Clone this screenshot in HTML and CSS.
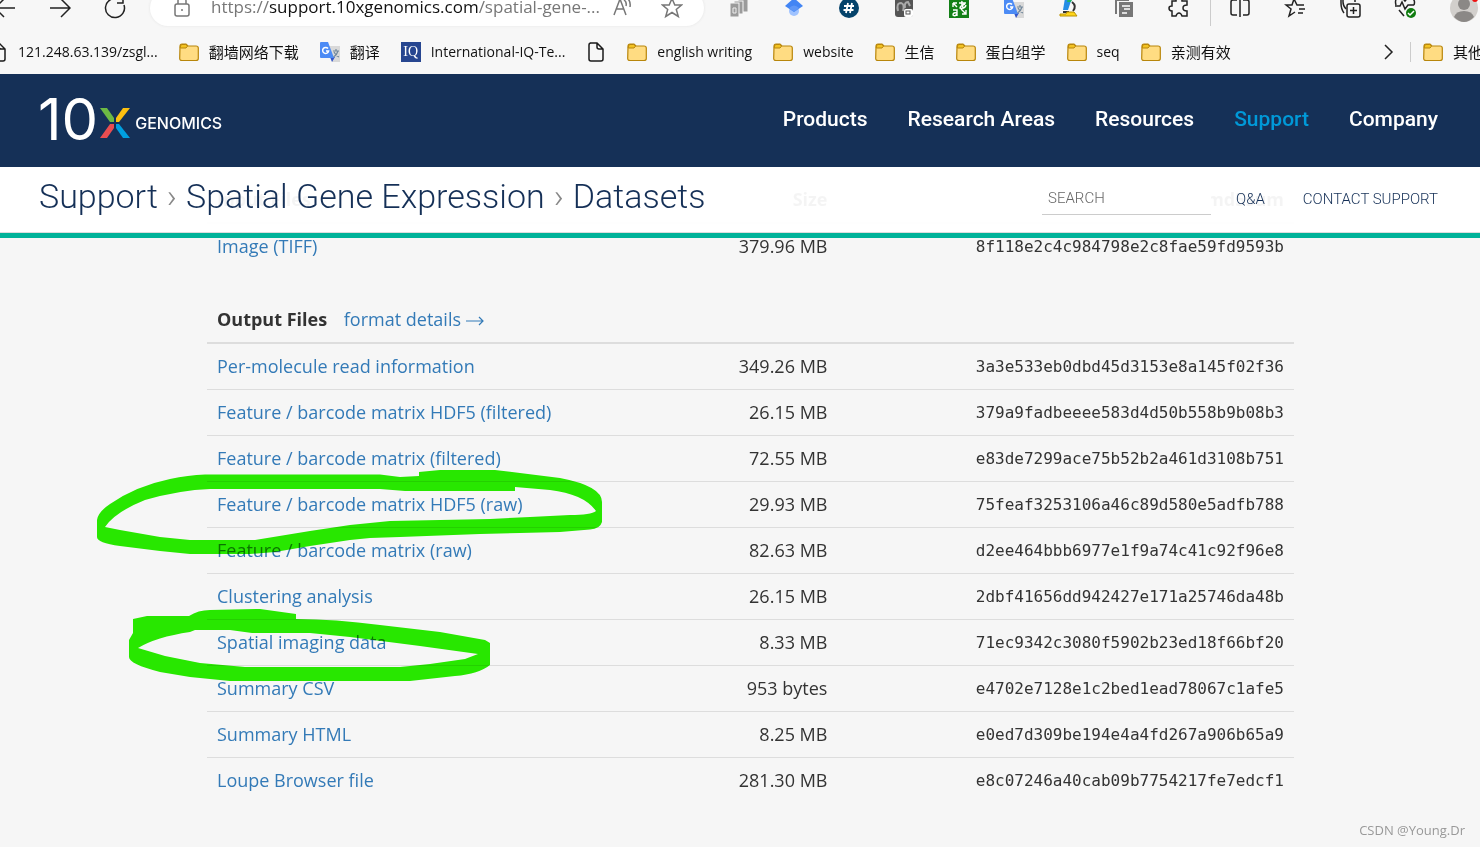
FILE: index.html
```
<!DOCTYPE html>
<html lang="en">
<head>
    <meta charset="UTF-8">
    <meta name="viewport" content="width=device-width, initial-scale=1.0">
    <title>Datasets - Spatial Gene Expression</title>
    <link rel="stylesheet" href="styles.css">
</head>
<body>

    <!-- shared icons -->
    <svg class="defs" width="0" height="0">
        <symbol id="folder" viewBox="0 0 20 20">
            <path d="M1 4.500Q1 2 3 2H7L9 4H17Q19.300 4 19.300 6V16.500Q19.300 18.500 17 18.500H3Q.7 18.500.7 16.500Z" fill="#ffdc82" stroke="#b8860b" stroke-width="1.200"/>
            <path d="M1.300 5Q1.300 2.500 3 2.500H6.800L8.500 4.200 7 6H1.300Z" fill="#f3c322" stroke="#b8860b" stroke-width="1"/>
        </symbol>
        <symbol id="page" viewBox="0 0 20 20">
            <path d="M4 1H11L17 7V17Q17 19 15 19H5Q3 19 3 17V3Q3 1 5 1M11 1V5Q11 7 13 7H17" fill="none" stroke="#1b1b1b" stroke-width="1.500"/>
        </symbol>
        <symbol id="gtrans" viewBox="0 0 20 20">
            <path d="M8 4H20V20H12Z" fill="#d9d9d9" stroke="none"/>
            <path d="M12 20L10 15H15Z" fill="#3557c9" stroke="none"/>
            <path d="M1 0H8L14 16H1Q0 16 0 15V1Q0 0 1 0Z" fill="#4c8bf5" stroke="none"/>
            <path d="M8 6.500A3 3 0 1 0 8.600 9H6" fill="none" stroke="#fff" stroke-width="1.500"/>
            <path d="M13 9H19M16 7V9M18 9Q17 13 13.500 15M14 10Q16 14 19 15" fill="none" stroke="#72889c" stroke-width="1.200"/>
        </symbol>
    </svg>

    <div class="browser">
        <div class="toolbar">
            <button class="tool" aria-label="Back"><svg width="22" height="22" viewBox="0 0 22 22"><path d="M21 11H2M10 2L1 11L10 20"/></svg></button>
            <button class="tool" aria-label="Forward"><svg width="22" height="22" viewBox="0 0 22 22"><path d="M1 11H20M12 2L21 11L12 20"/></svg></button>
            <button class="tool" aria-label="Reload"><svg width="22" height="22" viewBox="0 0 22 22"><path d="M14 2A9.500 9.500 0 1 0 20 8M13 6H19V0"/></svg></button>
            <div class="address">
                <svg class="gray" width="18" height="22" viewBox="0 0 18 22"><rect x="2" y="7" width="14" height="12" rx="2"/><path d="M5 7V4A4 4 0 0 1 13 4V7"/><circle cx="9" cy="13" r="1" fill="#777" stroke="none"/></svg>
                <span class="url">https://<b>support.10xgenomics.com</b>/spatial-gene-...</span>
                <button class="inner" aria-label="Read aloud"><svg class="gray" width="22" height="22" viewBox="0 0 22 22"><path d="M2 18L8 2L14 18M4 12H12M12 3Q15 5 14 9M15 1Q19 4 18 10"/></svg></button>
                <button class="inner star" aria-label="Favorite"><svg class="gray" width="22" height="22" viewBox="0 0 22 22"><path d="M11 1.500L13.800 8H20.500L15.300 12.500L17.300 19.500L11 15.500L4.700 19.500L6.700 12.500L1.500 8H8.200Z"/></svg></button>
            </div>
            <button class="tool first" aria-label="Copy pages"><svg width="20" height="20" viewBox="0 0 20 20"><g stroke="#f7f7f7" stroke-width="1" fill="#9b9b9b"><rect x="9" y="1" width="10" height="13"/><rect x="5" y="3" width="9" height="13"/><rect x="1" y="5" width="9" height="14"/></g><path d="M4 10H7V15H4Z" stroke="#eee" stroke-width="1"/></svg></button>
            <button class="tool" aria-label="Scholar"><svg width="20" height="20" viewBox="0 0 20 20"><g stroke="none"><circle cx="10" cy="13" r="5" fill="#a0c3ff"/><path d="M10 0L19 8L10 14L1 8Z" fill="#4285f4"/><path d="M5 10Q10 5 15 10L10 14Z" fill="#5e97f6"/></g></svg></button>
            <button class="tool" aria-label="Hashtag"><svg width="20" height="20" viewBox="0 0 20 20"><circle cx="10" cy="10" r="10" fill="#05436b" stroke="none"/><path d="M9 5L7 15M13 5L11 15M5 8H15M4.500 12H14.500" stroke="#fff" stroke-width="1.800"/></svg></button>
            <button class="tool" aria-label="Reader"><svg width="20" height="20" viewBox="0 0 20 20"><rect x="1" y="0" width="18" height="19" rx="3" fill="#555" stroke="none"/><path d="M4 13Q2 5 7 5Q11 6 9 13M11 10Q10 4 14 4L16 8" stroke="#aaa" stroke-width="2"/><rect x="10" y="11" width="9" height="8" rx="2" fill="#fff" stroke="none"/><rect x="12" y="13" width="4" height="3" stroke="#555" stroke-width="1"/></svg></button>
            <button class="tool" aria-label="Translate page"><svg width="20" height="20" viewBox="0 0 20 20"><rect width="20" height="20" fill="#138017" stroke="none"/><g stroke="#fff" stroke-width="1.400"><path d="M4 5H8M4 5V9M4 5L8 9M12 11L17 16M17 12V16H13M10 5H17M13 3Q12 8 15 10M16 6Q11 8 11 10Q16 11 17 7M4 12H8V18M8 15Q4 14 4 17Q6 19 8 16"/></g></svg></button>
            <button class="tool" aria-label="Google Translate"><svg width="20" height="20"><use href="#gtrans"/></svg></button>
            <button class="tool" aria-label="Microscope"><svg width="20" height="20" viewBox="0 0 20 20"><g stroke="none"><path d="M6 0H13L9 12H4Z" fill="#248de5"/><path d="M9 0H14L12 4H8Z" fill="#20b36b"/></g><path d="M13 4Q18 8 14 13M4 14H10" stroke="#333" stroke-width="2"/><path d="M1 18H18L15 14H8L7 16H1Z" fill="#ffd51b" stroke="#ba9200" stroke-width="1"/></svg></button>
            <button class="tool" aria-label="Notes"><svg width="20" height="20" viewBox="0 0 20 20"><path d="M2 16V2H15" stroke="#777" stroke-width="2"/><rect x="5" y="4" width="14" height="15" fill="#777" stroke="none"/><path d="M8 8H16M10 11H16M8 15H13" stroke="#fff" stroke-width="1.500"/></svg></button>
            <button class="tool" aria-label="Extensions"><svg width="22" height="22" viewBox="0 0 22 22"><path d="M4 4H8Q8 0 11 0Q14 0 14 4H19V8Q15 8 15 11Q15 14 19 14V19H14Q13 16 11 16Q9 16 8 19H4V14Q1 14 1 11Q1 9 4 9Z"/></svg></button>
            <span class="line"></span>
            <button class="tool" aria-label="Split screen"><svg width="22" height="22" viewBox="0 0 22 22"><path d="M8 3H4Q2 3 2 5V16Q2 18 4 18H8M11 0V20M14 3H18Q20 3 20 5V16Q20 18 18 18H14"/></svg></button>
            <button class="tool" aria-label="Favorites"><svg width="22" height="22" viewBox="0 0 22 22"><path d="M20 8H13L10 2L8 8H2L7 12L5 19L11 15M15 12H21M14 16H19"/></svg></button>
            <button class="tool" aria-label="Collections"><svg width="22" height="22" viewBox="0 0 22 22"><path d="M5 16Q2 12 2 6V3M4 0V5Q4 9 7 12M16 5V3"/><rect x="8" y="7" width="13" height="13" rx="2"/><path d="M14.500 10V17M11 13.500H18"/></svg></button>
            <button class="tool" aria-label="Browser essentials"><svg width="22" height="22" viewBox="0 0 22 22"><path d="M2 8Q0 1 6 1Q9 1 11 4Q13 1 16 1Q22 2 20 8M1 9H6L8 5L11 12L14 8H20M5 13L10 19"/><circle cx="17" cy="16" r="5" fill="#107c10" stroke="none"/><path d="M14 16L16 18L20 14" stroke="#fff"/></svg></button>
            <button class="tool" aria-label="Profile"><svg width="28" height="28" viewBox="0 0 28 28"><circle cx="14" cy="14" r="14" fill="#d2cfcc" stroke="none"/><g fill="#8b8886" stroke="none"><circle cx="14" cy="10" r="6"/><path d="M4 23Q6 17 14 17Q22 17 24 23Q19 28 14 28Q9 28 4 23Z"/></g><circle cx="25" cy="5" r="3" fill="#e11" stroke="none"/></svg></button>
        </div>

        <div class="bookmarks">
            <a href="#"><svg><use href="#page"/></svg>121.248.63.139/zsgl...</a>
            <a href="#"><svg><use href="#folder"/></svg><span class="zh">翻墙网络下载</span></a>
            <a href="#"><svg><use href="#gtrans"/></svg><span class="zh">翻译</span></a>
            <a href="#"><span class="iq">IQ</span>International-IQ-Te...</a>
            <a href="#" aria-label="Page"><svg><use href="#page"/></svg></a>
            <a href="#"><svg><use href="#folder"/></svg>english writing</a>
            <a href="#"><svg><use href="#folder"/></svg>website</a>
            <a href="#"><svg><use href="#folder"/></svg><span class="zh">生信</span></a>
            <a href="#"><svg><use href="#folder"/></svg><span class="zh">蛋白组学</span></a>
            <a href="#"><svg><use href="#folder"/></svg>seq</a>
            <a href="#"><svg><use href="#folder"/></svg><span class="zh">亲测有效</span></a>
            <button class="more" aria-label="More bookmarks"><svg viewBox="0 0 20 20"><path d="M7 3L14 10L7 17" fill="none" stroke="#222" stroke-width="1.500"/></svg></button>
            <a class="other" href="#"><svg><use href="#folder"/></svg><span class="zh">其他</span></a>
        </div>
    </div>

    <header class="top">
        <a class="logo" href="#">
            <span class="ten">10</span>
            <svg width="32" height="32" viewBox="0 0 32 32">
                <path d="M1 1H8L15 11V15H11Z" fill="#6cb944"/>
                <path d="M31 1H24L17 11V15H20Z" fill="#fdc010"/>
                <path d="M1 31H8L15 21V17H11Z" fill="#ea4d50"/>
                <path d="M31 31H24L17 21V17H20Z" fill="#009fdf"/>
            </svg>
            <span class="genomics">GENOMICS</span>
        </a>
        <nav>
            <a href="#">Products</a>
            <a href="#">Research Areas</a>
            <a href="#">Resources</a>
            <a class="active" href="#">Support</a>
            <a href="#">Company</a>
        </nav>
    </header>

    <div class="sub">
        <div class="crumbs">
            <a href="#">Support</a><i>›</i><a href="#">Spatial Gene Expression</a><i>›</i><a href="#">Datasets</a>
        </div>
        <input type="text" placeholder="SEARCH" aria-label="Search">
        <a class="small" href="#">Q&amp;A</a>
        <a class="small" href="#">CONTACT SUPPORT</a>
    </div>

    <main>
        <table>
            <colgroup><col class="name"><col class="size"><col></colgroup>
            <tr><th>Input Files</th><th>Size</th><th>md5sum</th></tr>
            <tr><td><a href="#">Image (TIFF)</a></td><td>379.96 MB</td><td>8f118e2c4c984798e2c8fae59fd9593b</td></tr>
        </table>
        <table>
            <colgroup><col class="name"><col class="size"><col></colgroup>
            <tr><th colspan="3">Output Files <a href="#">format details <svg width="18" height="10" viewBox="0 0 18 10"><path d="M0 5H17M13 1L17 5L13 9" fill="none" stroke="#337ab7" stroke-width="1.200"/></svg></a></th></tr>
            <tr><td><a href="#">Per-molecule read information</a></td><td>349.26 MB</td><td>3a3e533eb0dbd45d3153e8a145f02f36</td></tr>
            <tr><td><a href="#">Feature / barcode matrix HDF5 (filtered)</a></td><td>26.15 MB</td><td>379a9fadbeeee583d4d50b558b9b08b3</td></tr>
            <tr><td><a href="#">Feature / barcode matrix (filtered)</a></td><td>72.55 MB</td><td>e83de7299ace75b52b2a461d3108b751</td></tr>
            <tr><td><a href="#">Feature / barcode matrix HDF5 (raw)</a></td><td>29.93 MB</td><td>75feaf3253106a46c89d580e5adfb788</td></tr>
            <tr><td><a href="#">Feature / barcode matrix (raw)</a></td><td>82.63 MB</td><td>d2ee464bbb6977e1f9a74c41c92f96e8</td></tr>
            <tr><td><a href="#">Clustering analysis</a></td><td>26.15 MB</td><td>2dbf41656dd942427e171a25746da48b</td></tr>
            <tr><td><a href="#">Spatial imaging data</a></td><td>8.33 MB</td><td>71ec9342c3080f5902b23ed18f66bf20</td></tr>
            <tr><td><a href="#">Summary CSV</a></td><td>953 bytes</td><td>e4702e7128e1c2bed1ead78067c1afe5</td></tr>
            <tr><td><a href="#">Summary HTML</a></td><td>8.25 MB</td><td>e0ed7d309be194e4a4fd267a906b65a9</td></tr>
            <tr><td><a href="#">Loupe Browser file</a></td><td>281.30 MB</td><td>e8c07246a40cab09b7754217fe7edcf1</td></tr>
        </table>
    </main>

    <!-- hand drawn marker rings -->
    <svg class="marker" width="640" height="700" viewBox="0 0 640 700">
        <path d="M97 520Q98 512 110 504Q136 486 170 479Q188 475 205 474.500H380L400 477L419 476V472L440 470H495L520 473L560 478Q602 486 602 502V522Q600 529 590 529.500L560 532L520 533L480 534L400 537L370 538L350 540L310 546L275 552L250 554H190L160 551L120 546Q97 543 97 537ZM105 527L120 530L160 537L190 540H255L310 531L350 525L390 521L490 519L530 517L570 515Q591 515 596 511Q584 494 550 490L515 487V491H405L380 489H210Q180 490 145 500Q115 512 105 527Z"/>
        <path d="M133 619L147 616H189Q198 610 210 610L260 609L296 614V619Q335 619 380 625L440 632L485 640L490 643V665Q479 674 455 676L410 681H230L190 677L160 672Q129 664 129 657V640L133 633ZM138 648L165 656L200 663L245 667H400L430 664L465 659L478 654L420 646L350 637L310 633H252L230 630H195L190 632Q156 637 138 648Z"/>
    </svg>

    <div class="watermark">CSDN @Young.Dr</div>
</body>
</html>
```
FILE: styles.css
```
* {
    box-sizing: border-box;
}
body {
    margin: 0;
    min-height: 100vh;
    position: relative;
    overflow-x: hidden;
    background: #f6f6f6;
    color: #333;
    font-family: "Open Sans", "Noto Sans CJK SC", sans-serif;
    font-size: 18px;
}
a {
    color: #337ab7;
    text-decoration: none;
}
button {
    border: 0;
    padding: 0;
    background: none;
}
.defs {
    position: absolute;
}

/* browser chrome */
.browser {
    overflow: hidden;
    background: #f7f7f7;
}
.toolbar {
    display: flex;
    align-items: center;
    height: 36px;
    margin: -10px -11px 0 -23px;
}
.toolbar svg {
    fill: none;
    stroke: #222;
    stroke-width: 1.5;
    display: block;
    margin: auto;
}
.toolbar svg.gray {
    stroke: #777;
    margin: 0;
    flex: none;
}
.tool {
    flex: none;
    width: 55px;
}
.tool:last-child {
    margin-left: 4px;
}
.tool.first {
    margin-left: 7px;
}
.line {
    width: 1px;
    height: 36px;
    margin: 0 1px 0 4px;
    background: #ccc;
}
.address {
    flex: 1;
    min-width: 0;
    display: flex;
    align-items: center;
    height: 36px;
    margin-left: 8px;
    padding: 0 21px 0 23px;
    border-radius: 18px;
    background: #fff;
    box-shadow: 0 0 3px #e4e4e4;
}
.url {
    flex: 1;
    margin-left: 20px;
    color: #777;
    font-size: 17px;
    line-height: 20px;
    padding-bottom: 2px;
    white-space: nowrap;
}
.url b {
    color: #111;
    font-weight: normal;
}
.inner {
    margin-left: 12px;
}
.star {
    margin-left: 27px;
}
.bookmarks {
    display: flex;
    align-items: center;
    gap: 21px;
    height: 44px;
    margin: 4px 0 0 -12px;
}
.bookmarks a {
    display: flex;
    align-items: center;
    gap: 10px;
    flex: none;
    color: #111;
    font-size: 14px;
    line-height: 20px;
}
.bookmarks svg {
    width: 20px;
    height: 20px;
    display: block;
}
.zh {
    font-family: "Noto Sans CJK SC", sans-serif;
    font-size: 15px;
}
.iq {
    width: 20px;
    background: #274690;
    color: #fff;
    font-family: "Liberation Serif", serif;
    text-align: center;
}
.more {
    margin-left: auto;
}
.bookmarks .other {
    margin-right: -3px;
    padding-left: 12px;
    border-left: 1px solid #ccc;
    margin-left: -9px;
}

/* site header */
.top {
    display: flex;
    align-items: center;
    justify-content: space-between;
    height: 93px;
    padding: 0 42px 4px 38px;
    background: #153057;
}
.logo {
    display: flex;
    align-items: center;
    color: #fff;
}
.ten {
    font: 58px/58px Inter, sans-serif;
}
.logo svg {
    margin: 9px 0 0 1px;
}
.genomics {
    margin: 8px 0 0 4px;
    font: 500 16px/20px Inter, sans-serif;
}
nav {
    display: flex;
    gap: 40px;
}
nav a {
    color: #fff;
    font: 500 21px/26px Roboto, sans-serif;
}
nav .active {
    color: #0099d8;
}

.sub {
    position: relative;
    z-index: 1;
    display: flex;
    align-items: center;
    height: 71px;
    padding: 0 42px 8px 39px;
    background: rgba(255, 255, 255, 0.95);
    border-bottom: 5px solid #00b299;
    font-family: Roboto, sans-serif;
    box-shadow: inset 0 -1px #ddd;
}
.crumbs {
    flex: 1;
    font-size: 34px;
    font-weight: 300;
    line-height: 40px;
    white-space: nowrap;
}
.crumbs a {
    color: #153057;
}
.crumbs i {
    margin: 0 9px;
    color: #888;
    font-style: normal;
}
.sub input {
    width: 169px;
    height: 32px;
    margin-top: 5px;
    padding: 0 6px;
    border: 0;
    border-bottom: 1px solid #ccc;
    background: #fff;
    font: 300 15px Roboto, sans-serif;
}
.sub input::placeholder {
    color: #666;
}
.small {
    margin: 5px 0 0 25px;
    color: #153057;
    font-size: 15px;
    font-weight: 300;
}
.small:last-child {
    margin-left: 38px;
}

/* file tables */
main {
    margin-top: -61px;
    padding: 0 186px 20px 207px;
}
table {
    width: 100%;
    table-layout: fixed;
    border-collapse: separate;
    border-spacing: 0;
}
table + table {
    margin-top: 28px;
}
.name {
    width: 40%;
}
.size {
    width: 18%;
}
th, td {
    padding: 10px;
    line-height: 25px;
    text-align: right;
    white-space: nowrap;
}
th {
    border-bottom: 2px solid #ddd;
}
th:first-child, td:first-child {
    text-align: left;
}
th a {
    margin-left: 12px;
    font-weight: normal;
}
td {
    border-top: 1px solid #ddd;
}
tr:nth-child(2) td {
    border-top: 0;
}
td:last-child {
    font-family: "DejaVu Sans Mono", monospace;
    font-size: 16px;
}

.marker {
    position: absolute;
    top: 0;
    left: 0;
    fill: #29f000;
    mix-blend-mode: multiply;
    pointer-events: none;
}
.watermark {
    position: absolute;
    right: 15px;
    bottom: 7px;
    color: #999;
    font-size: 13px;
    line-height: 20px;
}
```
